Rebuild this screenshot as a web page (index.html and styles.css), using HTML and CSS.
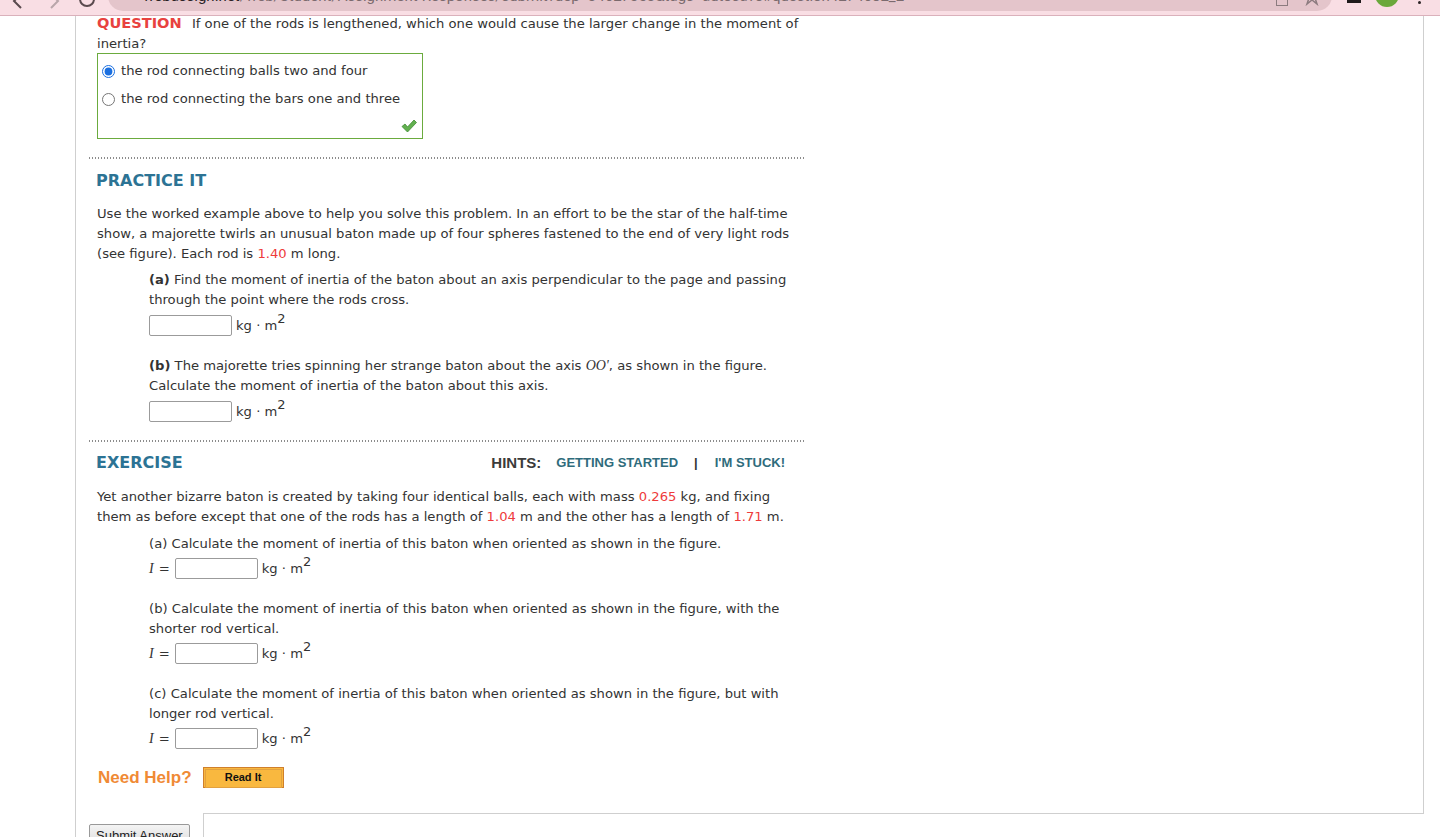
FILE: index.html
```html
<!DOCTYPE html>
<html lang="en">
<head>
<meta charset="UTF-8">
<meta name="viewport" content="width=device-width, initial-scale=1.0">
<title>WebAssign - Moment of Inertia</title>
<link rel="stylesheet" href="styles.css">
</head>
<body>
<!-- Browser toolbar (scrolled, only its lower edge shows) -->
<div class="chrome">
  <svg class="tb-icon back" width="20" height="15" viewBox="0 0 20 15"><path d="M11 -6 L4 1 L11 8" fill="none" stroke="#5a4a4e" stroke-width="2"/></svg>
  <svg class="tb-icon fwd" width="20" height="15" viewBox="0 0 20 15"><path d="M6 -6 L13 1 L6 8" fill="none" stroke="#b9a6aa" stroke-width="2"/></svg>
  <svg class="tb-icon reload" width="22" height="15" viewBox="0 0 22 15"><circle cx="11" cy="-1" r="7" fill="none" stroke="#5a4a4e" stroke-width="2"/></svg>
  <div class="omnibox">
    <span class="lock"></span>
    <span class="url"><b>webassign.net</b>/web/Student/Assignment-Responses/submit?dep=34627353&amp;tags=autosave#question4274682_2</span>
    <span class="omni-icons">
      <span class="omni-sq"></span>
      <svg width="16" height="10" viewBox="0 0 16 10"><path d="M8 -8 L10 -2 L16 -2 L11 2 L13 8 L8 4 L3 8 L5 2 L0 -2 L6 -2 Z" fill="none" stroke="#8c7b7f" stroke-width="1.5"/></svg>
    </span>
  </div>
  <span class="ext-box"></span>
  <span class="avatar"></span>
  <span class="menu-dot"></span>
</div>

<div class="page">
  <div class="question-box">
    <div class="content">

      <!-- Conceptual question -->
      <p class="text q-text"><span class="q-label">QUESTION</span> If one of the rods is lengthened, which one would cause the larger change in the moment of<br>inertia?</p>
      <div class="choices">
        <label class="choice"><input type="radio" name="rod" checked> the rod connecting balls two and four</label>
        <label class="choice"><input type="radio" name="rod"> the rod connecting the bars one and three</label>
        <svg class="check" width="16" height="14" viewBox="0 0 16 14">
          <path d="M1 7.5 L4 5 L6.5 8 L13 1 L15.5 3.5 L6.5 13 Z" fill="#62b04f" stroke="#3f8a33" stroke-width="0.8" stroke-linejoin="round"/>
        </svg>
      </div>

      <div class="dots"></div>

      <!-- Practice It -->
      <h2 class="section-title">PRACTICE IT</h2>
      <p class="text">Use the worked example above to help you solve this problem. In an effort to be the star of the half-time<br>show, a majorette twirls an unusual baton made up of four spheres fastened to the end of very light rods<br>(see figure). Each rod is <span class="num">1.40</span> m long.</p>

      <div class="part practice-a">
        <p><b>(a)</b> Find the moment of inertia of the baton about an axis perpendicular to the page and passing<br>through the point where the rods cross.</p>
        <div class="answer"><input type="text" class="ans-input"> <span class="unit">kg · m<sup>2</sup></span></div>
      </div>

      <div class="part">
        <p><b>(b)</b> The majorette tries spinning her strange baton about the axis <i class="axis">OO'</i>, as shown in the figure.<br>Calculate the moment of inertia of the baton about this axis.</p>
        <div class="answer"><input type="text" class="ans-input"> <span class="unit">kg · m<sup>2</sup></span></div>
      </div>

      <div class="dots dots-exercise"></div>

      <!-- Exercise -->
      <div class="exercise-head">
        <h2 class="section-title">EXERCISE</h2>
        <div class="hints">
          <span class="hints-label">HINTS:</span>
          <a href="#" class="hint-link">GETTING STARTED</a>
          <span class="hint-sep">|</span>
          <a href="#" class="hint-link">I'M STUCK!</a>
        </div>
      </div>
      <p class="text">Yet another bizarre baton is created by taking four identical balls, each with mass <span class="num">0.265</span> kg, and fixing<br>them as before except that one of the rods has a length of <span class="num">1.04</span> m and the other has a length of <span class="num">1.71</span> m.</p>

      <div class="part ex-part first">
        <p>(a) Calculate the moment of inertia of this baton when oriented as shown in the figure.</p>
        <div class="answer"><i class="sym">I</i> = <input type="text" class="ans-input"> <span class="unit">kg · m<sup>2</sup></span></div>
      </div>

      <div class="part ex-part">
        <p>(b) Calculate the moment of inertia of this baton when oriented as shown in the figure, with the<br>shorter rod vertical.</p>
        <div class="answer"><i class="sym">I</i> = <input type="text" class="ans-input"> <span class="unit">kg · m<sup>2</sup></span></div>
      </div>

      <div class="part ex-part">
        <p>(c) Calculate the moment of inertia of this baton when oriented as shown in the figure, but with<br>longer rod vertical.</p>
        <div class="answer"><i class="sym">I</i> = <input type="text" class="ans-input"> <span class="unit">kg · m<sup>2</sup></span></div>
      </div>

      <div class="need-help">
        <span class="need-help-label">Need Help?</span>
        <button class="read-it"><span>Read It</span></button>
      </div>

    </div>
  </div>

  <div class="footer">
    <div class="submit-cell"><button class="submit-btn">Submit Answer</button></div>
    <div class="next-panel"></div>
  </div>
</div>
</body>
</html>
```
FILE: styles.css
```css
/* General */
body {
  margin: 0;
  font-family: "DejaVu Sans", Verdana, sans-serif;
  font-size: 13.15px;
  line-height: 20px;
  color: #333;
  background: #fff;
}
p {
  margin: 0;
}

/* Browser toolbar */
.chrome {
  position: fixed;
  top: 0;
  left: 0;
  right: 0;
  height: 15px;
  background: #f9dee4;
  border-bottom: 1px solid #dab1bb;
  overflow: hidden;
  display: flex;
  align-items: flex-start;
  z-index: 10;
}
.tb-icon {
  flex: none;
}
.back {
  margin-left: 10px;
}
.fwd {
  margin-left: 15px;
}
.reload {
  margin-left: 11px;
}
.omnibox {
  flex: none;
  width: 1224px;
  height: 30px;
  margin-top: -19px;
  margin-left: 10px;
  border-radius: 15px;
  background: #e4c5cb;
  display: flex;
  align-items: flex-end;
}
.lock {
  width: 8px;
  height: 5px;
  margin: 0 0 15px 14px;
  background: #4a3d40;
}
.url {
  margin-left: 13px;
  margin-bottom: 5px;
  font-family: Roboto, "Liberation Sans", sans-serif;
  font-size: 15px;
  line-height: 20px;
  color: #7b6a6e;
  white-space: nowrap;
}
.url b {
  font-weight: normal;
  color: #2a2224;
}
.omni-icons {
  margin-left: auto;
  margin-right: 12px;
  margin-bottom: 5px;
  display: flex;
  align-items: flex-end;
  gap: 16px;
}
.omni-sq {
  width: 10px;
  height: 10px;
  border: 1.5px solid #8c7b7f;
  border-top: none;
}
.ext-box {
  flex: none;
  width: 14px;
  height: 3px;
  margin-left: 15px;
  background: #1f1a1b;
}
.avatar {
  flex: none;
  width: 24px;
  height: 24px;
  margin-left: 14px;
  margin-top: -17px;
  border-radius: 50%;
  background: #6aa83a;
}
.menu-dot {
  flex: none;
  width: 3px;
  height: 3px;
  margin-left: 19px;
  margin-top: 1px;
  border-radius: 50%;
  background: #2a2224;
}

/* Page frame */
.page {
  padding: 0 16px 0 75px;
}
.question-box {
  border-left: 1px solid #cfcfcf;
  border-right: 1px solid #cfcfcf;
  padding: 13px 0 25px 13px;
}
.content {
  width: 717px;
}
.text {
  padding-left: 8px;
  white-space: nowrap;
}
.q-text {
  padding-top: 1px;
  margin-bottom: -1px;
}
.num {
  color: #ee3b3b;
}

/* Conceptual question */
.q-label {
  margin-right: 6px;
  font-size: 14.6px;
  line-height: 1;
  font-weight: bold;
  color: #e8423f;
}
.choices {
  margin-left: 8px;
  width: 321px;
  height: 84px;
  border: 1px solid #6bab3e;
  padding: 0 0 0 3px;
  display: flex;
  flex-direction: column;
}
.choice {
  display: flex;
  align-items: center;
  height: 20px;
  margin-top: 7px;
  margin-bottom: 1px;
}
.choice input {
  width: 13px;
  height: 13px;
  margin: 0 6px 0 1px;
  accent-color: #1a6fe0;
}
.check {
  align-self: flex-end;
  margin: auto 5px 5px 0;
}

/* Dotted separators */
.dots {
  height: 2px;
  margin: 18px 0 0;
  background: repeating-linear-gradient(to right, #8c8c8c 0 1px, transparent 1px 3px);
}

/* Sections */
.section-title {
  margin: 12px 0 13px;
  padding-left: 7px;
  font-size: 16px;
  line-height: 20px;
  font-weight: bold;
  color: #2c7394;
}
.exercise-head {
  display: flex;
  align-items: center;
  justify-content: space-between;
  height: 20px;
  margin: 11px 0 14px;
}
.exercise-head .section-title {
  margin: 0;
}
.hints {
  display: flex;
  align-items: center;
  margin-right: 21px;
  font-family: "Liberation Sans", Arial, sans-serif;
  font-size: 13px;
  line-height: 20px;
  font-weight: bold;
}
.hints-label {
  color: #3b3b3b;
  font-size: 15px;
  margin-right: 15px;
}
.hint-link {
  color: #2f6c7c;
  text-decoration: none;
}
.hint-sep {
  margin: 0 17px 0 16px;
  color: #333;
}

/* Parts */
.part {
  margin-left: 60px;
  margin-top: 20px;
  white-space: nowrap;
}
.practice-a {
  margin-top: 6px;
}
.ex-part.first {
  margin-top: 7px;
}
.answer {
  display: flex;
  align-items: center;
  margin-top: 5px;
  height: 21px;
}
.ex-part .answer {
  margin-top: 4px;
}
.ans-input {
  width: 83px;
  height: 21px;
  box-sizing: border-box;
  border: 1px solid #9b9b9b;
  border-radius: 2px;
  margin: 0 4px 0 0;
  padding: 0;
}
.sym {
  font-family: "Liberation Serif", serif;
  font-size: 14px;
  margin-right: 5px;
}
.ex-part .answer .ans-input {
  margin-left: 5px;
}
.unit sup {
  font-size: 13px;
  line-height: 0;
  vertical-align: 7px;
}
.axis {
  font-family: "Liberation Serif", serif;
  font-size: 14px;
}

/* Need help */
.need-help {
  display: flex;
  align-items: center;
  margin-top: 18px;
  padding-left: 9px;
}
.need-help-label {
  font-family: "Liberation Sans", Arial, sans-serif;
  font-size: 17px;
  font-weight: bold;
  color: #f08a35;
}
.read-it {
  margin-left: 11px;
  width: 81px;
  height: 21px;
  padding: 1px;
  border: 1px solid #cf7f2c;
  background: #f9b83f;
  cursor: pointer;
}
.read-it span {
  display: block;
  height: 100%;
  border: 1px solid #e2a140;
  font-family: "Liberation Sans", Arial, sans-serif;
  font-size: 11px;
  line-height: 15px;
  font-weight: bold;
  color: #111;
}

/* Footer */
.footer {
  display: flex;
  height: 40px;
}
.submit-cell {
  box-sizing: border-box;
  flex: none;
  width: 128px;
  border-left: 1px solid #cfcfcf;
  padding: 11px 0 0 13px;
}
.submit-btn {
  height: 22px;
  padding: 0 6px;
  border: 1px solid #999;
  border-radius: 2px;
  background: linear-gradient(#f4f4f4, #dcdcdc);
  font-family: "Liberation Sans", Arial, sans-serif;
  font-size: 13px;
  color: #222;
}
.next-panel {
  flex: 1;
  border-top: 1px solid #cfcfcf;
  border-left: 1px solid #cfcfcf;
}
```
